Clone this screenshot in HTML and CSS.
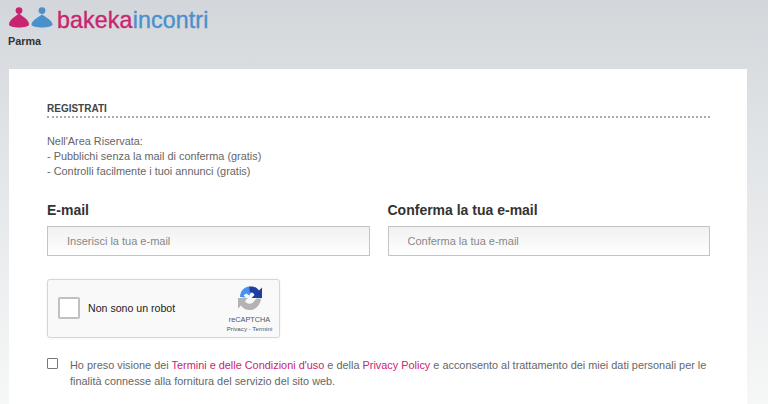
FILE: index.html
```html
<!DOCTYPE html>
<html lang="it">
<head>
<meta charset="utf-8">
<title>Bakeka Incontri</title>
<link rel="stylesheet" href="styles.css">
</head>
<body>
<header class="head">
  <div class="logo">
    <svg class="logo-icon" width="44" height="21" viewBox="0 0 44 21">
      <circle cx="10" cy="3.6" r="3.4" fill="#c9246f"/>
      <path d="M10 6.5 L14 9.5 C18 12 20 15 20 17.5 C20 19.5 15 20.5 10 20.5 C5 20.5 0 19.5 0 17.5 C0 15 2 12 6 9.5 Z" fill="#c9246f"/>
      <circle cx="33" cy="3.6" r="3.4" fill="#4a90cb"/>
      <path d="M33 7.5 L36 9.5 C40 12 43.5 15 43.5 17.5 C43.5 19.5 38 20.5 33 20.5 C28 20.5 22.5 19.5 22.5 17.5 C22.5 15 26 12 30 9.5 Z" fill="#4a90cb"/>
    </svg>
    <span class="brand"><span class="brand-a">bakeka</span><span class="brand-b">incontri</span></span>
  </div>
  <div class="city">Parma</div>
</header>
<main class="card">
  <h2 class="title">REGISTRATI</h2>
  <p class="intro">Nell'Area Riservata:<br>- Pubblichi senza la mail di conferma (gratis)<br>- Controlli facilmente i tuoi annunci (gratis)</p>
  <div class="fields">
    <div class="field">
      <label class="label" for="m1">E-mail</label>
      <input class="input" id="m1" type="text" placeholder="Inserisci la tua e-mail">
    </div>
    <div class="field">
      <label class="label" for="m2">Conferma la tua e-mail</label>
      <input class="input" id="m2" type="text" placeholder="Conferma la tua e-mail">
    </div>
  </div>
  <div class="captcha">
    <span class="cap-box"></span>
    <span class="cap-text">Non sono un robot</span>
    <div class="cap-brand">
      <svg width="24" height="24" viewBox="0 0 24 24">
        <path d="M2 11 C2 6 5 1.5 11 0.5 L16 6 C13.5 6 12 7.5 11.5 9.5 L8 7.5 L5.5 9.5 L8 11.5 Z" fill="#4a90ee"/>
        <path d="M11 0.5 C15.5 0 19 1.5 21 4.5 L24 1.5 L24 12 L13.5 12 L16.5 9 C15.5 7 14 6 12 6.5 Z" fill="#1f3f9e"/>
        <path d="M0 12 L10 12 L7 15 C8.5 18 12.5 18.5 15 16.5 L18.5 12.5 L23 12.5 C22.5 19 17.5 24 12 24 C8 24 5 22.5 3 19.5 L0 22.5 Z" fill="#b3b3b3"/>
      </svg>
      <span class="cap-name">reCAPTCHA</span>
      <span class="cap-links">Privacy - Termini</span>
    </div>
  </div>
  <div class="consent">
    <span class="check"></span>
    <p class="consent-text">Ho preso visione dei <a class="link" href="#">Termini e delle Condizioni d'uso</a> e della <a class="link" href="#">Privacy Policy</a> e acconsento al trattamento dei miei dati personali per le finalità connesse alla fornitura del servizio del sito web.</p>
  </div>
</main>
</body>
</html>
```
FILE: styles.css
```css
* { box-sizing: border-box; }
html, body { height: 100%; }
body {
  margin: 0;
  height: 404px;
  overflow: hidden;
  background: linear-gradient(180deg, #d3d6da 0, #dfe2e5 120px, #eef0f1 300px, #f6f7f7 404px);
  font-family: "Liberation Sans", Arial, sans-serif;
  color: #555;
}
.head { height: 69px; padding: 6px 0 0 9px; }
.logo { display: flex; align-items: flex-start; height: 25px; }
.logo-icon { margin-top: 1px; flex: none; }
.brand { font-size: 23.2px; line-height: 28px; margin-left: 4px; letter-spacing: 0.14px; -webkit-text-stroke: 0.35px currentColor; }
.brand-a { color: #c9246f; }
.brand-b { color: #4a90cb; }
.city { font-size: 10.8px; font-weight: bold; color: #333; line-height: 14px; margin-top: 3px; margin-left: -1px; }
.card {
  margin: 0 21px 0 9px;
  background: #fff;
  height: 335px;
  padding: 33px 37px 0 38px;
}
.title {
  margin: 0;
  font-size: 10px;
  font-weight: bold;
  color: #444;
  line-height: 14px;
  height: 16px;
  border-bottom: 2px dotted #aaa;
}
.intro { margin: 16px 0 0; font-size: 10.9px; line-height: 15px; color: #666; }
.fields { display: flex; gap: 18px; margin-top: 22px; }
.field { width: 323px; }
.label { display: block; font-size: 14px; font-weight: bold; color: #333; line-height: 18px; margin-bottom: 7px; }
.input {
  display: block;
  width: 100%;
  height: 30px;
  border: 1px solid #c4c4c4;
  background: linear-gradient(180deg, #f1f1f1, #fff);
  padding: 0 19px;
  font: 11px "Liberation Sans", sans-serif;
  outline: none;
  border-radius: 0;
}
.input::placeholder { color: #888; opacity: 1; }
.captcha {
  display: flex;
  align-items: center;
  width: 233px;
  height: 59px;
  margin-top: 23px;
  padding: 0 0 0 10px;
  background: #f9f9f9;
  border: 1px solid #d6d6d6;
  border-radius: 3px;
  box-shadow: 0 0 3px rgba(0,0,0,.06);
}
.cap-box { flex: none; width: 22px; height: 22px; background: #fff; border: 2px solid #c1c1c1; border-radius: 2px; margin-top: -2px; }
.cap-text { margin-left: 8px; font-size: 10.6px; color: #222; flex: 1; margin-top: -2px; }
.cap-brand { flex: none; width: 59px; margin-top: 2px; display: flex; flex-direction: column; align-items: center; }
.cap-name { font-size: 7.3px; color: #555; line-height: 9px; margin-top: 5px; }
.cap-links { font-size: 6.2px; color: #555; line-height: 9px; }
.consent { display: flex; margin-top: 20px; }
.check { flex: none; width: 11px; height: 11px; border: 1px solid #777; background: #fff; border-radius: 1px; }
.consent-text { margin: 0 0 0 12px; font-size: 10.9px; line-height: 15.5px; color: #666; }
.link { color: #c9246f; text-decoration: none; }
```
